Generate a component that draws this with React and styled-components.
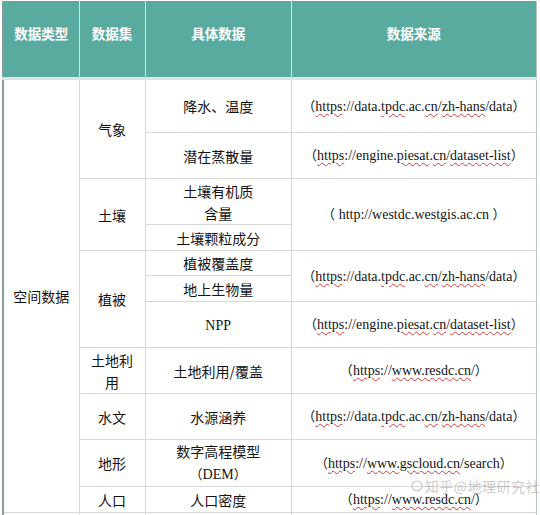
import React from "react";
import styled, { createGlobalStyle } from "styled-components";

const Global = createGlobalStyle`
  html, body { margin: 0; padding: 0; background: #fff; overflow: hidden; }
  body { width: 540px; height: 515px; }
`;

const Page = styled.div`
  position: relative;
  width: 540px;
  height: 515px;
  padding: 1px 0 0 2px;
  box-sizing: border-box;
  overflow: hidden;
`;

const Table = styled.table`
  border-collapse: collapse;
  table-layout: fixed;
  width: 535px;
  border-left: 2px solid #8c9a99;
`;

const HeadCell = styled.th`
  background: #5aab9f;
  color: #fff;
  font-family: "Noto Sans CJK SC", "Noto Sans", sans-serif;
  font-weight: 700;
  font-size: 13.5px;
  height: 64px;
  padding: 0 0 12px;
  text-align: center;
  vertical-align: middle;
  border-right: 1px solid #cde6e1;
  border-bottom: 3px solid #dde3e2;
  &:last-child { border-right: 1px solid #b9c4c3; }
`;

const Row = styled.tr`
  height: ${(p) => p.$h}px;
`;

const Cell = styled.td`
  border: 1px solid #d8d8d8;
  text-align: center;
  vertical-align: middle;
  padding: 0 2px;
  color: #141414;
  font-family: "Noto Sans CJK SC", sans-serif;
  font-size: 14px;
  line-height: 22px;
  &:first-child { border-left: none; }
`;

const UrlCell = styled(Cell)`
  font-family: "Liberation Serif", "Noto Sans CJK SC", serif;
  font-size: 14px;
  border-right: 1px solid #b9c4c3;
  white-space: nowrap;
`;

const Latin = styled.span`
  font-family: "Liberation Serif", serif;
`;

const Sq = styled.span`
  text-decoration: underline wavy #d43a3a;
  text-decoration-thickness: 1px;
  text-underline-offset: 2px;
`;

const Paren = styled.span`
  font-family: "Noto Sans CJK SC", sans-serif;
  font-size: 13px;
`;

const Watermark = styled.div`
  position: absolute;
  right: 0;
  bottom: 19px;
  font-family: "Noto Sans CJK SC", sans-serif;
  font-size: 14px;
  color: rgba(150, 150, 150, 0.5);
  letter-spacing: 0.5px;
  display: flex;
  align-items: center;
  gap: 2px;
`;

const Url = ({ children }) => (
  <>
    <Paren>（</Paren>
    {children}
    <Paren>）</Paren>
  </>
);

const Tpdc = () => (
  <Url>
    <Sq>https</Sq>://data.<Sq>tpdc</Sq>.ac.<Sq>cn</Sq>/<Sq>zh-hans</Sq>/data
  </Url>
);

const Piesat = () => (
  <Url>
    <Sq>https</Sq>://engine.<Sq>piesat</Sq>.<Sq>cn</Sq>/<Sq>dataset-list</Sq>
  </Url>
);

const Resdc = () => (
  <Url>
    <Sq>https</Sq>://<Sq>www.resdc.cn</Sq>/
  </Url>
);

export default function App() {
  return (
    <Page>
      <Global />
      <Table>
        <colgroup>
          <col style={{ width: 76 }} />
          <col style={{ width: 66 }} />
          <col style={{ width: 146 }} />
          <col style={{ width: 245 }} />
        </colgroup>
        <thead>
          <tr>
            <HeadCell>数据类型</HeadCell>
            <HeadCell>数据集</HeadCell>
            <HeadCell>具体数据</HeadCell>
            <HeadCell>数据来源</HeadCell>
          </tr>
        </thead>
        <tbody>
          <Row $h={54}>
            <Cell rowSpan={11}>空间数据</Cell>
            <Cell rowSpan={2}>气象</Cell>
            <Cell>降水、温度</Cell>
            <UrlCell><Tpdc /></UrlCell>
          </Row>
          <Row $h={46}>
            <Cell>潜在蒸散量</Cell>
            <UrlCell><Piesat /></UrlCell>
          </Row>
          <Row $h={46}>
            <Cell rowSpan={2}>土壤</Cell>
            <Cell>土壤有机质<br />含量</Cell>
            <UrlCell rowSpan={2}>
              <Paren>（</Paren> http://westdc.westgis.ac.cn <Paren>）</Paren>
            </UrlCell>
          </Row>
          <Row $h={26}>
            <Cell>土壤颗粒成分</Cell>
          </Row>
          <Row $h={25}>
            <Cell rowSpan={3}>植被</Cell>
            <Cell>植被覆盖度</Cell>
            <UrlCell rowSpan={2}><Tpdc /></UrlCell>
          </Row>
          <Row $h={26}>
            <Cell>地上生物量</Cell>
          </Row>
          <Row $h={46}>
            <Cell><Latin>NPP</Latin></Cell>
            <UrlCell><Piesat /></UrlCell>
          </Row>
          <Row $h={46}>
            <Cell>土地利<br />用</Cell>
            <Cell>土地利用/覆盖</Cell>
            <UrlCell><Resdc /></UrlCell>
          </Row>
          <Row $h={46}>
            <Cell>水文</Cell>
            <Cell>水源涵养</Cell>
            <UrlCell><Tpdc /></UrlCell>
          </Row>
          <Row $h={46}>
            <Cell>地形</Cell>
            <Cell>数字高程模型<br /><Paren>（</Paren><Latin>DEM</Latin><Paren>）</Paren></Cell>
            <UrlCell>
              <Url>
                <Sq>https</Sq>://<Sq>www.gscloud.cn</Sq>/search
              </Url>
            </UrlCell>
          </Row>
          <Row $h={26}>
            <Cell>人口</Cell>
            <Cell>人口密度</Cell>
            <UrlCell><Resdc /></UrlCell>
          </Row>
          <Row $h={26}>
            <Cell />
            <Cell />
            <Cell />
            <UrlCell />
          </Row>
        </tbody>
      </Table>
      <Watermark>
        <svg width="12" height="12" viewBox="0 0 12 12">
          <circle cx="6" cy="6" r="5" fill="none" stroke="rgba(150,150,150,0.5)" strokeWidth="1.2" />
        </svg>
        知乎@地理研究社
      </Watermark>
    </Page>
  );
}
